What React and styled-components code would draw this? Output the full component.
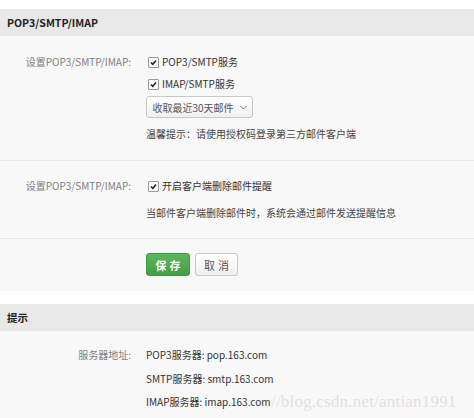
import React from 'react'
import styled, { createGlobalStyle } from 'styled-components'

const Global = createGlobalStyle`
  body {
    margin: 0;
    background: #fff;
    font-family: "Noto Sans CJK SC", "Noto Sans", sans-serif;
    font-size: 10px;
    color: #333;
  }
`

const Page = styled.div`
  padding-top: 9px;
  position: relative;
  width: 474px;
  height: 418px;
  overflow: hidden;
`

const Section = styled.section`
  margin-bottom: 13px;
`

const Header = styled.div`
  height: 27px;
  background: #e8e8e8;
  display: flex;
  align-items: center;
  padding-left: 7px;
  font-weight: bold;
  font-size: 10.5px;
  color: #222;
`

const Body = styled.div`
  background: #f8f8f8;
`

const Row = styled.div`
  display: grid;
  grid-template-columns: 131px 1fr;
  column-gap: 15px;
  padding: ${p => p.pad || '15px 0 16px'};
  border-top: ${p => (p.divider ? '1px solid #eaeaea' : 'none')};
`

const Label = styled.div`
  text-align: right;
  color: #808080;
  line-height: 22px;
`

const Field = styled.div`
  display: flex;
  flex-direction: column;
  align-items: flex-start;
`

const Line = styled.div`
  line-height: 22px;
  color: ${p => p.muted ? '#444' : '#333'};
  margin-top: ${p => p.gap || 0}px;
  display: flex;
  align-items: center;
  gap: 3px;
`

const Box = styled.span`
  width: 9px;
  height: 9px;
  border: 1px solid #999;
  border-radius: 1px;
  background: #fff;
  display: inline-flex;
  align-items: center;
  justify-content: center;
  margin-left: 2px;
`

const Select = styled.div`
  margin-top: 1px;
  height: 22px;
  width: 107px;
  box-sizing: border-box;
  border: 1px solid #c8c8c8;
  border-radius: 3px;
  background: linear-gradient(#fff, #f0f0f0);
  display: flex;
  align-items: center;
  justify-content: center;
  gap: 6px;
  color: #555;
`

const Buttons = styled.div`
  display: flex;
  gap: 5px;
  padding-top: 1px;
`

const Button = styled.button`
  width: ${p => (p.primary ? 44 : 43)}px;
  height: 23px;
  border-radius: 3px;
  font-family: inherit;
  font-size: 11px;
  letter-spacing: 3px;
  padding: 0 0 0 3px;
  cursor: pointer;
  border: 1px solid ${p => (p.primary ? '#3e9a3e' : '#c8c8c8')};
  color: ${p => (p.primary ? '#fff' : '#555')};
  background: ${p => (p.primary ? 'linear-gradient(#5cb85c, #459c45)' : 'linear-gradient(#fff, #f0f0f0)')};
  font-weight: ${p => (p.primary ? 'bold' : 'normal')};
`

const Watermark = styled.div`
  position: absolute;
  left: 271px;
  top: 392px;
  font-family: "Liberation Serif", serif;
  font-size: 17px;
  color: rgba(175, 175, 175, 0.35);
  letter-spacing: 0.2px;
  pointer-events: none;
`

function Check() {
  return (
    <Box>
      <svg width="7" height="7" viewBox="0 0 7 7">
        <path d="M1 3.6 L2.8 5.3 L6 1.4" fill="none" stroke="#222" strokeWidth="1.5" />
      </svg>
    </Box>
  )
}

function Chevron() {
  return (
    <svg width="7" height="5" viewBox="0 0 7 5">
      <path d="M0.5 1 L3.5 4 L6.5 1" fill="none" stroke="#777" strokeWidth="1" />
    </svg>
  )
}

export default function App() {
  return (
    <Page>
      <Global />
      <Section>
        <Header>POP3/SMTP/IMAP</Header>
        <Body>
          <Row pad="15px 0 15px">
            <Label>设置POP3/SMTP/IMAP:</Label>
            <Field>
              <Line><Check />POP3/SMTP服务</Line>
              <Line><Check />IMAP/SMTP服务</Line>
              <Select>收取最近30天邮件<Chevron /></Select>
              <Line muted gap={5}>温馨提示：请使用授权码登录第三方邮件客户端</Line>
            </Field>
          </Row>
          <Row divider pad="14px 0 14px">
            <Label>设置POP3/SMTP/IMAP:</Label>
            <Field>
              <Line><Check />开启客户端删除邮件提醒</Line>
              <Line muted gap={5}>当邮件客户端删除邮件时，系统会通过邮件发送提醒信息</Line>
            </Field>
          </Row>
          <Row divider pad="13px 0 15px">
            <span />
            <Buttons>
              <Button primary>保存</Button>
              <Button>取消</Button>
            </Buttons>
          </Row>
        </Body>
      </Section>
      <Section>
        <Header>提示</Header>
        <Body>
          <Row pad="13px 0 10px">
            <Label>服务器地址:</Label>
            <Field>
              <Line>POP3服务器: pop.163.com</Line>
              <Line gap={2}>SMTP服务器: smtp.163.com</Line>
              <Line gap={1}>IMAP服务器: imap.163.com</Line>
            </Field>
          </Row>
        </Body>
      </Section>
      <Watermark>//blog.csdn.net/antian1991</Watermark>
    </Page>
  )
}
